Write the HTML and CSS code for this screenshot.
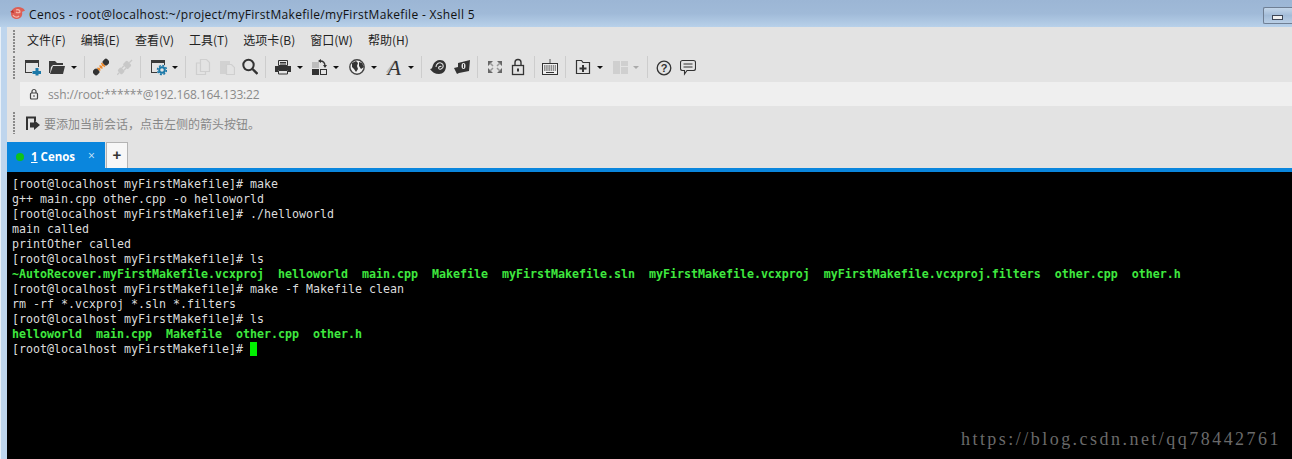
FILE: index.html
```html
<!DOCTYPE html>
<html lang="zh">
<head>
<meta charset="utf-8">
<title>Xshell 5</title>
<link rel="stylesheet" href="styles.css">
</head>
<body>
<div class="window">
  <header class="titlebar">
    <svg class="logo" viewBox="0 0 16 14" width="16" height="14">
      <path d="M1 8C1 4 4 1 8 1c3 0 6 1 7 4-1 0-2 0-3 1 1 3-1 7-5 7-3 0-6-2-6-5z" fill="#dd5f55"/>
      <path d="M3 9c1 2 4 3 6 1M6 4c2-1 4 0 4 2-1 1-3 1-4 0" fill="none" stroke="#f5b5a8" stroke-width="1.2"/>
      <path d="M0 6l3-2 1 3z" fill="#b8342c"/>
    </svg>
    <span class="title">Cenos - root@localhost:~/project/myFirstMakefile/myFirstMakefile - Xshell 5</span>
    <div class="minimize"><span class="min-glyph"></span></div>
  </header>
  <div class="body">
    <div class="rail"></div>
    <main class="main">
      <div class="bar menubar">
        <span class="grip"></span>
        <nav class="menu">
          <span>文件(F)</span><span>编辑(E)</span><span>查看(V)</span><span>工具(T)</span><span>选项卡(B)</span><span>窗口(W)</span><span>帮助(H)</span>
        </nav>
      </div>
      <div class="bar toolbar">
        <span class="grip"></span>
        <svg class="ic m10" viewBox="0 0 16 18"><rect x=".5" y="2.5" width="13" height="12" fill="none" stroke="#3a3a3a"/><rect y="2" width="14" height="3" fill="#3a3a3a"/><rect x="7" y="9" width="9" height="9" fill="#e3e3e3"/><path d="M10.500 10h3v3h3v3h-3v1.500h-3V16h-3v-3h3z" fill="#1b78a8"/></svg>
        <svg class="ic m8" viewBox="0 0 16 18"><path d="M0 3h6l2 2h6v2H4L2 9 1 15H0zM4 8h12l-2 8H1z" fill="#3a3a3a"/></svg>
        <span class="caret m6"></span>
        <span class="sep m7"></span>
        <svg class="ic m8" viewBox="0 0 16 18"><g transform="rotate(-45 8 9)"><rect x="-2" y="6" width="6" height="6" rx="2" fill="#333"/><rect x="12" y="6" width="6" height="6" rx="2" fill="#333"/><path d="M5 7v4M8 7v4M11 6.500v5" stroke="#ee8a2c" stroke-width="1.500"/><path d="M4 9h8" stroke="#ee8a2c"/></g></svg>
        <svg class="ic m8" viewBox="0 0 16 18"><g transform="rotate(-45 8 9)"><rect x="0" y="6" width="5" height="6" rx="1.500" fill="#c8c8c8"/><rect x="8" y="5.500" width="6" height="7" rx="1.500" fill="#c8c8c8"/><path d="M-3 9h3M14 9h4M5 7.500h3M5 10.500h3" stroke="#c8c8c8" stroke-width="1.300"/></g></svg>
        <span class="sep m7"></span>
        <svg class="ic m10" viewBox="0 0 16 18"><rect x=".5" y="2.500" width="13" height="12" fill="none" stroke="#3a3a3a"/><rect y="2" width="14" height="3" fill="#3a3a3a"/><rect x="6" y="7" width="10" height="10" fill="#e3e3e3"/><circle cx="11" cy="12" r="2.800" fill="none" stroke="#1b78a8" stroke-width="2"/><circle cx="11" cy="12" r="4.500" fill="none" stroke="#1b78a8" stroke-width="1.500" stroke-dasharray="2 1.500"/></svg>
        <span class="caret m5"></span>
        <span class="sep m7"></span>
        <svg class="ic m9" viewBox="0 0 16 18"><path d="M5.500 1.500h6l3 3v9h-9zM5.500 5H1.500v11.500h9V13.500" fill="none" stroke="#cfcfcf" stroke-width="1.200"/></svg>
        <svg class="ic m8" viewBox="0 0 16 18"><path d="M1 3h10v3H7v10H1z" fill="#d2d2d2"/><path d="M7.500 6.500h5l3 3v7h-8z" fill="none" stroke="#cfcfcf" stroke-width="1.200"/></svg>
        <svg class="ic m7" viewBox="0 0 16 18"><circle cx="6.500" cy="7" r="5.200" fill="none" stroke="#333" stroke-width="2"/><path d="M10.500 11l5 5" stroke="#333" stroke-width="2.400"/></svg>
        <span class="sep m7"></span>
        <svg class="ic m9" viewBox="0 0 16 18"><path d="M3.500 2.500h9v5h-9zM5 4.500h6M5 6h6" fill="none" stroke="#333"/><path d="M0 8h16v6h-3v-2H3v2H0z" fill="#333"/><path d="M3.500 12.500h9v3.500h-9z" fill="none" stroke="#333"/></svg>
        <span class="caret m6"></span>
        <svg class="ic m9" viewBox="0 0 16 18"><rect y="4" width="7" height="6" fill="#bdbdbd"/><rect y="11" width="7" height="6" fill="#333"/><rect x="8.500" y="11.500" width="6" height="5" fill="none" stroke="#333"/><path d="M8 3c3 0 5 1 5 5" fill="none" stroke="#333" stroke-width="1.300"/><path d="M6 3l3-2v4zM11 7h4l-2 3z" fill="#333"/></svg>
        <span class="caret m5"></span>
        <svg class="ic m10" viewBox="0 0 16 18"><circle cx="8" cy="9" r="7.200" fill="#eee" stroke="#444" stroke-width="1.400"/><path d="M3 5l4-2 2 2-1 3 1 3-2 3-2-3-2-2zM10 4l3 1 2 4-3 2-2-3z" fill="#333"/></svg>
        <span class="caret m6"></span>
        <svg class="ic ic-font m9" viewBox="0 0 16 18"><path d="M0 14L9 2l1.500 1L2 15z" fill="#bbb"/><text class="ic-a" x="1.500" y="17">A</text></svg>
        <span class="caret m6"></span>
        <span class="sep m7"></span>
        <svg class="ic m8" viewBox="0 0 16 18"><path d="M0 11c2 0 2-1 3-4 1-3 4-5 7-5 4 0 6 3 6 6 0 5-3 8-7 8-4 0-7-2-9-5z" fill="#333"/><path d="M6 9c0-3 3-5 5-4 3 1 3 5 0 6-2 1-3-1-2-2 1-1 2-1 2 0" fill="none" stroke="#e3e3e3" stroke-width="1.100"/></svg>
        <svg class="ic m8" viewBox="0 0 16 18"><path d="M4 5l12-3-1 11-10 2-2 1-3-6 4-1z" fill="#333"/><ellipse cx="9.500" cy="8" rx="2" ry="3" fill="#e3e3e3"/><path d="M9.500 6v4" stroke="#333"/></svg>
        <span class="sep m7"></span>
        <svg class="ic m9" viewBox="0 0 16 18"><path d="M1 3h5L1 8zM15 3v5l-5-5zM1 15v-5l5 5zM15 15h-5l5-5z" fill="#666"/><path d="M3 5l3 3M13 5l-3 3M3 13l3-3M13 13l-3-3" stroke="#9a9a9a" stroke-width="1.500"/></svg>
        <svg class="ic m7" viewBox="0 0 16 18"><rect x="2.500" y="7.500" width="11" height="9" fill="none" stroke="#333" stroke-width="1.300"/><path d="M5 7V4.500a3 3 0 0 1 6 0V7" fill="none" stroke="#333" stroke-width="1.400"/><rect x="7" y="10.500" width="2" height="3" fill="#333"/></svg>
        <span class="sep m8"></span>
        <svg class="ic m7" viewBox="0 0 16 18"><path d="M8 1v4" stroke="#555"/><rect x=".5" y="5.500" width="15" height="11" fill="#eee" stroke="#333"/><path d="M2 8h12M2 10h12M2 12h12" stroke="#333" stroke-dasharray="1.500 .7"/><path d="M4 14.500h8" stroke="#333"/></svg>
        <span class="sep m7"></span>
        <svg class="ic m9" viewBox="0 0 16 18"><path d="M1.500 2.500h5l1.500 2h6.500v11h-13z" fill="none" stroke="#333" stroke-width="1.200"/><path d="M7 7h2v2.500h2.500v2H9V14H7v-2.500H4.500v-2H7z" fill="#333"/></svg>
        <span class="caret m6"></span>
        <svg class="ic m10" viewBox="0 0 16 18"><rect y="3" width="7" height="13" fill="#cfcfcf"/><rect x="8" y="3" width="7" height="5" fill="#cfcfcf"/><rect x="8" y="9" width="7" height="7" fill="#cfcfcf"/></svg>
        <span class="caret caret-off m4"></span>
        <span class="sep m8"></span>
        <svg class="ic m8" viewBox="0 0 16 18"><circle cx="8" cy="10" r="6.800" fill="none" stroke="#333" stroke-width="1.300"/><text class="ic-q" x="8" y="14">?</text></svg>
        <svg class="ic m8" viewBox="0 0 16 18"><path d="M2.500 2.500h11a2 2 0 0 1 2 2v6a2 2 0 0 1-2 2H7l-2.500 3.500v-3.500h-2a2 2 0 0 1-2-2v-6a2 2 0 0 1 2-2z" fill="none" stroke="#333" stroke-width="1.100"/><path d="M3.500 6h9M3.500 9h9" stroke="#333"/></svg>
      </div>
      <div class="address">
        <svg class="addr-lock" viewBox="0 0 10 12" width="10" height="12"><rect x="1.500" y="5" width="7" height="6" rx="1" fill="none" stroke="#444" stroke-width="1.200"/><path d="M3 5V3.500a2 2 0 0 1 4 0V5" fill="none" stroke="#444" stroke-width="1.200"/><rect x="4.500" y="7" width="1" height="2" fill="#444"/></svg>
        <span class="addr-text">ssh://root:******@192.168.164.133:22</span>
      </div>
      <div class="bar hintbar">
        <span class="grip"></span>
        <svg class="hint-ic" viewBox="0 0 14 15" width="14" height="15"><path d="M1 14V1.500h8V5" fill="none" stroke="#333" stroke-width="2"/><path d="M4 6.500h4V4l6 5-6 5v-2.500H4z" fill="#333"/></svg>
        <span class="hint">要添加当前会话，点击左侧的箭头按钮。</span>
      </div>
      <div class="tabs">
        <div class="tab">
          <span class="dot"></span>
          <span class="tab-label"><u>1</u> Cenos</span>
          <span class="tab-x">×</span>
        </div>
        <div class="tab-add">+</div>
      </div>
      <div class="accent"></div>
      <section class="term">
        <pre class="term-text">[root@localhost myFirstMakefile]# make
g++ main.cpp other.cpp -o helloworld
[root@localhost myFirstMakefile]# ./helloworld
main called
printOther called
[root@localhost myFirstMakefile]# ls
<b>~AutoRecover.myFirstMakefile.vcxproj  helloworld  main.cpp  Makefile  myFirstMakefile.sln  myFirstMakefile.vcxproj  myFirstMakefile.vcxproj.filters  other.cpp  other.h</b>
[root@localhost myFirstMakefile]# make -f Makefile clean
rm -rf *.vcxproj *.sln *.filters
[root@localhost myFirstMakefile]# ls
<b>helloworld  main.cpp  Makefile  other.cpp  other.h</b>
[root@localhost myFirstMakefile]# <span class="cursor"></span></pre>
        <div class="watermark">https://blog.csdn.net/qq78442761</div>
      </section>
    </main>
  </div>
</div>
</body>
</html>
```

FILE: styles.css
```css
html, body { margin: 0; padding: 0; height: 100%; overflow: hidden; background: #000; }
.window { display: flex; flex-direction: column; height: 459px; font-family: "Open Sans", "Noto Sans CJK SC", sans-serif; }

.titlebar { height: 27px; flex: none; display: flex; align-items: center; padding-left: 10px; position: relative;
  background: linear-gradient(#9cb6d5 0%, #a0bad8 50%, #b8d1ea 100%); }
.logo { flex: none; margin-bottom: 2px; }
.title { margin-left: 3px; font-size: 12px; letter-spacing: .32px; color: #111; white-space: nowrap; margin-top: 1px; }
.minimize { position: absolute; right: 0; top: 7px; width: 29px; height: 17px; box-sizing: border-box;
  border: 1px solid #6f7f94; border-right: 0; border-radius: 2px 0 0 2px; background: linear-gradient(#c4d6ea, #a3bcd8 50%, #b9cfe6); display: flex; justify-content: center; align-items: flex-end; padding-right: 1px; padding-bottom: 3px; }
.min-glyph { width: 11px; height: 5px; box-sizing: border-box; border: 1px solid #3d4656; background: #f0f0f0; }

.body { flex: 1; display: flex; min-height: 0; }
.rail { width: 7px; flex: none; background: #bed5ed; border-left: 1px solid #e8f0f8; box-sizing: border-box; }
.main { flex: 1; min-width: 0; display: flex; flex-direction: column; background: #e3e3e3; }

.bar { display: flex; align-items: center; padding-left: 6px; }
.grip { flex: none; width: 2px; height: 23px; background: repeating-linear-gradient(#8a8a8a 0 2px, transparent 2px 3px); }

.menubar { height: 28px; }
.menu { display: flex; gap: 15px; margin-left: 12px; font-size: 12px; color: #222; font-family: "Noto Sans CJK SC", sans-serif; margin-bottom: 3px; }

.toolbar { height: 27px; padding-bottom: 3px; box-sizing: border-box; }
.ic { flex: none; width: 16px; height: 18px; display: block; }
.ic-font { overflow: visible; }
.sep { flex: none; width: 1px; height: 22px; background: #cdcdcd; }
.caret { flex: none; width: 0; height: 0; border: 3px solid transparent; border-top: 3px solid #111; border-bottom: 0; }
.caret-off { border-top-color: #aaa; }
.ic-a { font: italic 22px "Liberation Serif", serif; fill: #333; }
.ic-q { font: bold 11px "Liberation Sans", sans-serif; fill: #333; text-anchor: middle; }
.m4 { margin-left: 4px; } .m5 { margin-left: 5px; } .m6 { margin-left: 6px; } .m7 { margin-left: 7px; }
.m8 { margin-left: 8px; } .m9 { margin-left: 9px; } .m10 { margin-left: 10px; }

.address { height: 24px; flex: none; margin-left: 13px; background: #efefef; display: flex; align-items: center; padding-left: 9px; }
.addr-lock { flex: none; }
.addr-text { margin-left: 9px; font-size: 12px; letter-spacing: -.14px; color: #8a8a8a; }

.hintbar { height: 36px; flex: none; padding-bottom: 2px; box-sizing: border-box; }
.hintbar .grip { height: 22px; }
.hint-ic { flex: none; margin-left: 11px; }
.hint { margin-left: 4px; font-size: 12px; color: #888; font-family: "Noto Sans CJK SC", sans-serif; }

.tabs { height: 26px; flex: none; display: flex; gap: 1px; }
.tab { width: 98px; background: #0a86dd; display: flex; align-items: center; color: #fff; padding: 3px 0 0 9px; box-sizing: border-box; }
.dot { width: 8px; height: 8px; border-radius: 50%; background: #0ec21a; flex: none; }
.tab-label { margin-left: 7px; font-size: 11.5px; font-weight: 700; white-space: nowrap; width: 50px; }
.tab-x { margin-left: 7px; font-size: 12px; color: #cfe6f8; margin-bottom: 2px; }
.tab-add { width: 22px; box-sizing: border-box; border: 1px solid #b4b4b4; border-bottom: 0; background: #f7f7f7; font: 700 15px/24px "Liberation Sans", sans-serif; color: #333; text-align: center; }
.accent { height: 4px; flex: none; background: #0a86dd; }

.term { flex: 1; min-height: 0; background: #000; padding: 5px 0 0 5px; position: relative; overflow: hidden; }
.term-text { margin: 0; font: 11.63px/15px "DejaVu Sans Mono", monospace; color: #dcdcdc; white-space: pre; }
.term-text b { color: #3fe83f; font-weight: 700; }
.cursor { display: inline-block; width: 7px; height: 14px; background: #00f000; vertical-align: -3px; }
.watermark { position: absolute; right: 11px; bottom: 10px; font: 18px/20px "Liberation Serif", serif; color: #6a6a6a; letter-spacing: 2.47px; white-space: nowrap; }
```
